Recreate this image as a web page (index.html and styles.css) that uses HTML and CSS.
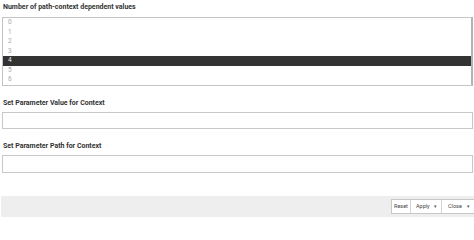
FILE: index.html
```html
<!DOCTYPE html>
<html>
<head>
<meta charset="utf-8">
<link rel="stylesheet" href="styles.css">
</head>
<body>
<div class="panel">
  <div class="field-label first">Number of path-context dependent values</div>
  <div class="listbox">
    <div class="item">0</div>
    <div class="item">1</div>
    <div class="item">2</div>
    <div class="item">3</div>
    <div class="item selected">4</div>
    <div class="item">5</div>
    <div class="item">6</div>
  </div>
  <div class="field-label second">Set Parameter Value for Context</div>
  <div class="text-input"></div>
  <div class="field-label third">Set Parameter Path for Context</div>
  <div class="text-input tall"></div>
</div>
<div class="footer">
  <div class="btn-group">
    <div class="btn reset">Reset</div>
    <div class="btn split">Apply <span class="caret">▾</span></div>
    <div class="btn split last">Close <span class="caret">▾</span></div>
  </div>
</div>
</body>
</html>
```
FILE: styles.css
```css
html, body {
  margin: 0;
  padding: 0;
  background: #ffffff;
  width: 474px;
  height: 217px;
  overflow: hidden;
  font-family: Roboto, "Liberation Sans", Arial, sans-serif;
}

.panel {
  padding: 2px 1px 0 2px;
}

.field-label {
  font-size: 7px;
  font-weight: bold;
  color: #333333;
  line-height: 10px;
  height: 10px;
  padding-left: 1px;
  white-space: nowrap;
}

.field-label.first {
  margin-bottom: 5px;
}

.field-label.second {
  margin-top: 12px;
  margin-bottom: 4px;
}

.field-label.third {
  margin-top: 12px;
  margin-bottom: 4px;
}

.listbox {
  border: 1px solid #c4c4c4;
  border-right: 2px solid #b4b4b4;
  height: 66.5px;
  overflow: hidden;
}

.item {
  height: 9.5px;
  line-height: 9.5px;
  font-size: 6.5px;
  color: #a8a8a8;
  padding-left: 5px;
}

.item.selected {
  background: #333333;
  color: #e8e8e8;
}

.text-input {
  height: 15px;
  border: 1px solid #c8c8c8;
  background: #ffffff;
}

.text-input.tall {
  height: 16px;
}

.footer {
  margin-top: 23px;
  margin-left: 1px;
  height: 21px;
  background: #eeeeee;
  display: flex;
  justify-content: flex-end;
  align-items: flex-start;
  padding-top: 3px;
  box-sizing: border-box;
}

.btn-group {
  display: flex;
  height: 15px;
  background: #ffffff;
  border: 1px solid #c8c8c8;
  border-right: none;
  box-sizing: border-box;
}

.btn {
  font-size: 5.5px;
  color: #444444;
  line-height: 13px;
  display: flex;
  align-items: center;
  white-space: nowrap;
}

.btn.reset {
  width: 18px;
  justify-content: center;
  border-right: 1px solid #d4d4d4;
}

.btn.split {
  width: 31px;
  padding-left: 5px;
  box-sizing: border-box;
  border-right: 1px solid #d4d4d4;
}

.btn.split.last {
  width: 32px;
  padding-left: 6px;
  border-right: none;
}

.caret {
  font-size: 5px;
  margin-left: auto;
  margin-right: 4px;
  color: #555555;
}
```
